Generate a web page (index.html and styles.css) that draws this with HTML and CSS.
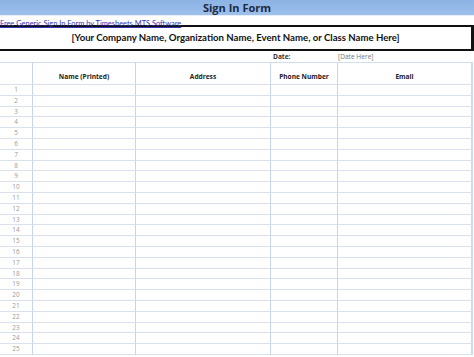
FILE: index.html
```html
<!DOCTYPE html>
<html>
<head>
<meta charset="utf-8">
<link rel="stylesheet" href="styles.css">
</head>
<body>
<div class="sheet">
  <div class="title">Sign In Form</div>
  <div class="link-row"><a class="link" href="#">Free Generic Sign In Form by Timesheets MTS Software</a></div>
  <div class="company">[Your Company Name, Organization Name, Event Name, or Class Name Here]</div>
  <div class="date-row">
    <span></span><span></span><span></span>
    <span class="date-label">Date:</span>
    <span class="date-value">[Date Here]</span>
  </div>
  <div class="grid" id="grid">
    <div class="cell head num"></div>
    <div class="cell head">Name (Printed)</div>
    <div class="cell head">Address</div>
    <div class="cell head">Phone Number</div>
    <div class="cell head last">Email</div>
  </div>
</div>
<script src="script.js"></script>
</body>
</html>
```
FILE: script.js
```js
var g = document.getElementById('grid');
for (var i = 1; i <= 25; i++) {
  var html = '<div class="cell num">' + i + '</div><div class="cell"></div><div class="cell"></div><div class="cell"></div><div class="cell last"></div>';
  g.insertAdjacentHTML('beforeend', html);
}
```
FILE: styles.css
```css
html, body {
  margin: 0;
  padding: 0;
  background: #ffffff;
}
.sheet {
  width: 474px;
  font-family: "Open Sans", "Liberation Sans", sans-serif;
}
.title {
  height: 16px;
  line-height: 16px;
  background: linear-gradient(#8cb3e3, #9dc0ec);
  text-align: center;
  font-weight: bold;
  font-size: 11px;
  color: #1c2a44;
  border-bottom: 1px solid #e6eef8;
  box-sizing: border-box;
}
.link-row {
  height: 9px;
  line-height: 9px;
}
.link {
  font-family: "Lato", "Open Sans", sans-serif;
  font-size: 7.45px;
  color: #3535b8;
  text-decoration: underline;
}
.company {
  height: 26px;
  box-sizing: border-box;
  border-top: 2px solid #111;
  border-bottom: 2px solid #111;
  border-right: 3px solid #111;
  border-left: 0;
  width: 474px;
  text-align: center;
  font-family: "Lato", "Open Sans", sans-serif;
  font-weight: bold;
  font-size: 9.6px;
  line-height: 22px;
  color: #111;
}
.date-row {
  display: grid;
  grid-template-columns: 33px 103px 135px 67px 135px;
  height: 11px;
  line-height: 11px;
  font-size: 6.6px;
}
.date-label {
  font-weight: bold;
  color: #333;
  padding-left: 2px;
}
.date-value {
  color: #777;
}
.grid {
  display: grid;
  grid-template-columns: 33px 103px 135px 67px 135px;
  grid-template-rows: 22px;
  grid-auto-rows: 10.8px;
  border-top: 1px solid #d3deec;
  width: 473px;
}
.cell {
  box-sizing: border-box;
  border-right: 1px solid #c6d5ea;
  border-bottom: 1px solid #d9e1ec;
  font-size: 6.4px;
}
.cell.last {
  border-right: 2px solid #cfdcee;
}
.cell.num {
  color: #9a9a9a;
  text-align: center;
  line-height: 10px;
}
.cell.head {
  display: flex;
  align-items: flex-end;
  justify-content: center;
  padding-bottom: 3px;
  font-weight: bold;
  color: #222;
  font-size: 6.6px;
}
```
